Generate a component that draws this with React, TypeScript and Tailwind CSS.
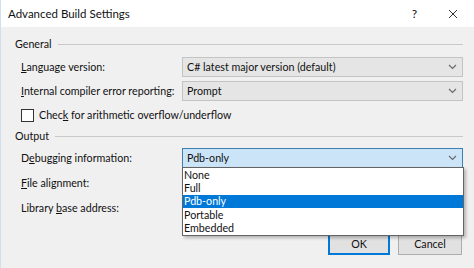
import React from "react";

// Small chevron used in the combo boxes
const Chevron: React.FC = () => (
  <svg width="9" height="6" viewBox="0 0 9 6" className="shrink-0">
    <polyline points="1,1 4.5,4.5 8,1" fill="none" stroke="#6b6b6b" strokeWidth="1.2" />
  </svg>
);

const Combo: React.FC<{ value?: string; focused?: boolean }> = ({ value, focused }) => (
  <div
    className={
      focused
        ? "flex h-[20px] items-center justify-between border border-[#3c7fb1] bg-[#cce4f7] pl-[4px] pr-[5px]"
        : "flex h-[20px] items-center justify-between border border-[#c4c4c4] bg-[#e5e5e5] pl-[4px] pr-[5px]"
    }
  >
    <span>{value}</span>
    <Chevron />
  </div>
);

const SectionHeader: React.FC<{ title: string }> = ({ title }) => (
  <div className="flex h-[14px] items-center pl-[14px] pr-[11px]">
    <span className="mr-[6px]">{title}</span>
    <div className="h-px flex-1 bg-[#c8c8c8]" />
  </div>
);

const Row: React.FC<{ label: React.ReactNode; children: React.ReactNode }> = ({ label, children }) => (
  <div className="grid grid-cols-[161px_1fr] items-center pl-[20px] pr-[11px]">
    <span className="whitespace-nowrap">{label}</span>
    {children}
  </div>
);

const options = ["None", "Full", "Pdb-only", "Portable", "Embedded"];

export default function App() {
  return (
    <div
      className="relative flex h-[268px] w-[474px] flex-col overflow-hidden border-l border-[#cfe0f1] bg-[#f0f0f0] text-[10.7px] text-[#111]"
      style={{ fontFamily: 'Lato, "Noto Sans", sans-serif' }}
    >
      {/* Title bar */}
      <div className="flex h-[27px] shrink-0 items-center bg-white pl-[7px] pr-[16px]">
        <span className="flex-1 text-[11.5px]">Advanced Build Settings</span>
        <span className="mr-[31px] text-[12px]">?</span>
        <svg width="10" height="10" viewBox="0 0 10 10">
          <path d="M1 1 L9 9 M9 1 L1 9" stroke="#333" strokeWidth="1" />
        </svg>
      </div>

      {/* Body */}
      <div className="flex flex-col pt-[10px]">
        <SectionHeader title="General" />
        <div className="mt-[6px] flex flex-col gap-[4px]">
          <Row label={<><u>L</u>anguage version:</>}>
            <Combo value="C# latest major version (default)" />
          </Row>
          <Row label={<><u>I</u>nternal compiler error reporting:</>}>
            <Combo value="Prompt" />
          </Row>
        </div>
        <div className="mt-[7px] flex h-[14px] items-center pl-[20px]">
          <div className="mr-[5px] h-[13px] w-[13px] border border-[#333] bg-white" />
          <span>
            Chec<u>k</u> for arithmetic overflow/underflow
          </span>
        </div>
        <div className="mt-[7px]">
          <SectionHeader title="Output" />
        </div>
        <div className="mt-[5px] flex flex-col gap-[5px]">
          <Row label={<>D<u>e</u>bugging information:</>}>
            <Combo value="Pdb-only" focused />
          </Row>
          <Row label={<><u>F</u>ile alignment:</>}>
            <Combo />
          </Row>
          <Row label={<>Library <u>b</u>ase address:</>}>
            <div className="h-[20px] border border-[#c4c4c4] bg-white" />
          </Row>
        </div>

        {/* Buttons */}
        <div className="mt-[16px] flex justify-end gap-[8px] pr-[12px]">
          <button className="h-[21px] w-[62px] border-2 border-[#0078d7] bg-[#e1e1e1]">OK</button>
          <button className="h-[21px] w-[64px] border border-[#adadad] bg-[#e1e1e1]">Cancel</button>
        </div>
      </div>

      {/* Open dropdown list */}
      <div className="absolute left-[181px] top-[167px] w-[282px] border border-[#646464] bg-white shadow-[2px_2px_3px_rgba(0,0,0,0.25)]">
        {options.map((o) => (
          <div
            key={o}
            className={
              o === "Pdb-only"
                ? "flex h-[13.4px] items-center bg-[#0078d7] pl-[1px] text-white"
                : "flex h-[13.4px] items-center pl-[1px]"
            }
          >
            {o}
          </div>
        ))}
      </div>
    </div>
  );
}
